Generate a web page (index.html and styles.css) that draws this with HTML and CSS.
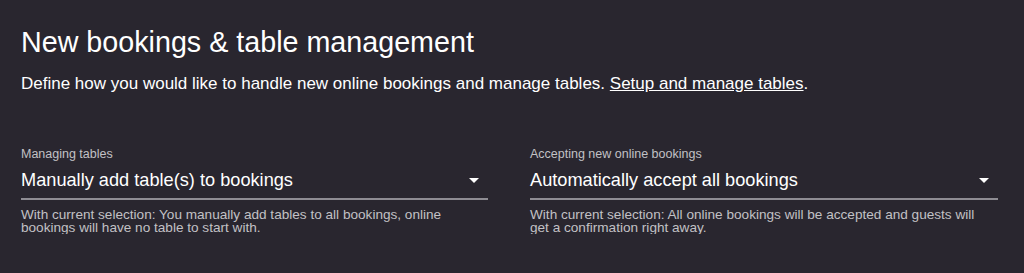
FILE: index.html
```html
<!DOCTYPE html>
<html>
  <head>
    <meta charset="utf-8" />
    <link rel="stylesheet" href="styles.css">
  </head>

  <body class="settings-body">
    <section class="settings-section">
      <h1 class="settings-heading">New bookings &amp; table management</h1>
      <p class="settings-intro">
        Define how you would like to handle new online bookings and manage tables.
        <a class="settings-link" href="#">Setup and manage tables</a>.
      </p>

      <div class="settings-fields">
        <div class="settings-field">
          <label class="settings-field-label">Managing tables</label>
          <div class="settings-select">
            <span class="settings-select-value">Manually add table(s) to bookings</span>
            <svg class="settings-select-arrow" width="24" height="24" viewBox="0 0 24 24">
              <path d="M7 10l5 5 5-5z" />
            </svg>
          </div>
          <p class="settings-field-help">
            With current selection: You manually add tables to all bookings, online bookings will have no table to start with.
          </p>
        </div>

        <div class="settings-field">
          <label class="settings-field-label">Accepting new online bookings</label>
          <div class="settings-select">
            <span class="settings-select-value">Automatically accept all bookings</span>
            <svg class="settings-select-arrow" width="24" height="24" viewBox="0 0 24 24">
              <path d="M7 10l5 5 5-5z" />
            </svg>
          </div>
          <p class="settings-field-help">
            With current selection: All online bookings will be accepted and guests will get a confirmation right away.
          </p>
        </div>
      </div>
    </section>
  </body>
</html>
```

FILE: styles.css
```css
:root {
  --bg: #29262f;
  --text: #ffffff;
  --muted: #c2c1c5;
  --font: 'Liberation Sans', Arial, sans-serif;
}

body {
  font-family: var(--font);
}

.settings-body {
  margin: 0;
  background-color: var(--bg);
  color: var(--text);
}

.settings-section {
  padding: 25px 26px 0 21px;
}

.settings-heading {
  margin: 0;
  font-size: 28.7px;
  font-weight: 400;
  line-height: 34px;
}

.settings-intro {
  margin: 14px 0 0;
  font-size: 17px;
  line-height: 22px;
}

.settings-link {
  color: inherit;
}

.settings-fields {
  display: grid;
  grid-template-columns: 467px 468px;
  column-gap: 42px;
  margin-top: 52px;
}

.settings-field {
  display: flex;
  flex-direction: column;
}

.settings-field-label {
  font-size: 12.5px;
  line-height: 14px;
  color: var(--muted);
}

.settings-select {
  display: flex;
  align-items: center;
  justify-content: space-between;
  padding: 7px 0 6px;
  border-bottom: 2px solid #8e8c93;
}

.settings-select-value {
  font-size: 18.2px;
  line-height: 22px;
}

.settings-select-arrow {
  fill: #ffffff;
  margin-right: 2px;
}

.settings-field-help {
  margin: 8px 0 0;
  font-size: 13.6px;
  line-height: 13px;
  color: var(--muted);
  padding-right: 20px;
}
```
